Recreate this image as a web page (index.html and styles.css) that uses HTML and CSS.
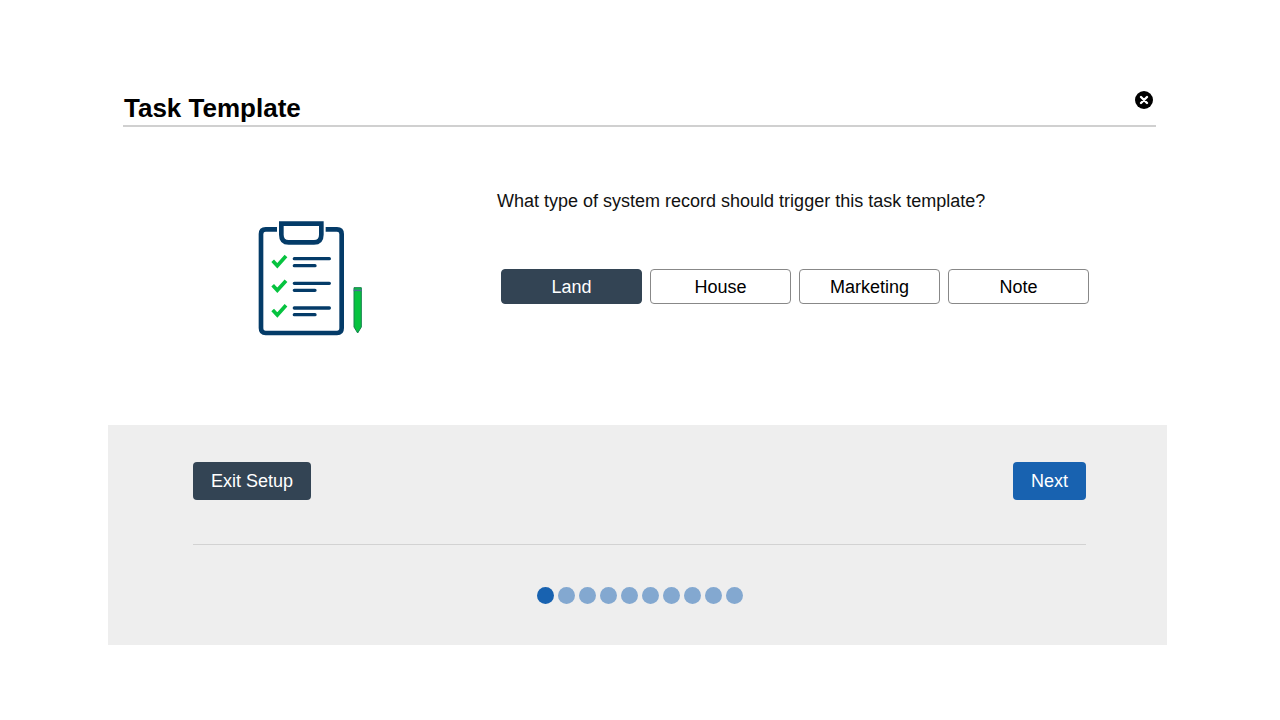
FILE: index.html
```
<!DOCTYPE html>
<html lang="en">
<head>
    <meta charset="UTF-8">
    <meta name="viewport" content="width=device-width, initial-scale=1.0">
    <title>Task Template</title>
    <link rel="stylesheet" href="styles.css">
</head>
<body>
    <div class="wizard">
        <header class="wizard-header">
            <h1>Task Template</h1>
            <button type="button" class="close-btn" aria-label="Close">
                <svg width="18" height="18" viewBox="0 0 18 18">
                    <circle cx="9" cy="9" r="9" fill="#000"/>
                    <path d="M6 6l6 6M12 6l-6 6" stroke="#fff" stroke-width="2.4" stroke-linecap="round"/>
                </svg>
            </button>
        </header>

        <main class="wizard-body">
            <div class="illustration">
                <svg width="105" height="116" viewBox="54 30 315 348" fill="none" aria-hidden="true">
                    <!-- Clipboard -->
                    <g stroke="#043b68">
                        <path d="M111 58H77Q63 58 63 72V354Q63 369 77 369H291Q305 369 305 354V72Q305 58 291 58H257" stroke-width="14"/>
                        <path d="M124 41H244V74Q244 97 222 97H146Q124 97 124 74Z" stroke-width="14"/>
                        <path d="M163 146H268M163 167H225M163 220H268M163 241H225M163 294H268M163 314H225" stroke-width="10" stroke-linecap="round"/>
                    </g>
                    <!-- Check marks -->
                    <path d="M98 152L112 167L138 138M98 226L112 241L138 212M98 300L112 315L138 286" stroke="#06c33f" stroke-width="11"/>
                    <!-- Pencil -->
                    <path d="M342 233H364V351L353 369L342 351Z" fill="#06c33f" stroke="#17804f" stroke-width="3"/>
                    <path d="M341 241H365" stroke="#4c6f93" stroke-width="5"/>
                </svg>
            </div>
            <div class="question">
                <p id="question-text">What type of system record should trigger this task template?</p>
                <div class="options" role="group" aria-labelledby="question-text">
                    <button type="button" class="option selected" aria-pressed="true">Land</button>
                    <button type="button" class="option" aria-pressed="false">House</button>
                    <button type="button" class="option" aria-pressed="false">Marketing</button>
                    <button type="button" class="option" aria-pressed="false">Note</button>
                </div>
            </div>
        </main>

        <footer class="wizard-footer">
            <div class="actions">
                <button type="button" class="btn btn-exit">Exit Setup</button>
                <button type="button" class="btn btn-next">Next</button>
            </div>
            <div class="steps">
                <span class="dot active"></span>
                <span class="dot"></span>
                <span class="dot"></span>
                <span class="dot"></span>
                <span class="dot"></span>
                <span class="dot"></span>
                <span class="dot"></span>
                <span class="dot"></span>
                <span class="dot"></span>
                <span class="dot"></span>
            </div>
        </footer>
    </div>
</body>
</html>
```
FILE: styles.css
```
* {
    box-sizing: border-box;
}
body {
    font-family: "Liberation Sans", Arial, sans-serif;
    font-size: 18px;
    line-height: 24px;
    margin: 0;
    padding: 88px 113px 72px 108px;
    background-color: #fff;
    color: #111;
}
button {
    font: inherit;
    cursor: pointer;
}
.wizard-header {
    display: flex;
    justify-content: space-between;
    align-items: flex-start;
    margin: 0 11px 0 15px;
    padding: 3px 3px 0 1px;
    border-bottom: 2px solid #d0d0d0;
}
h1 {
    margin: 0;
    font-size: 26px;
    line-height: 34px;
    color: #000;
}
.close-btn {
    display: flex;
    padding: 0;
    border: 0;
    background: none;
}
.wizard-body {
    display: grid;
    grid-template-columns: 389px 1fr;
    padding: 62px 78px 89px 0;
}
.illustration {
    display: flex;
    justify-content: center;
    padding: 31px 0 0 16px;
}
.question p {
    margin: 0 0 56px;
}
.options {
    display: grid;
    grid-template-columns: repeat(4, 1fr);
    gap: 8px;
    margin-left: 4px;
}
.option {
    height: 35px;
    padding: 0;
    border: 1px solid #888;
    border-radius: 4px;
    background-color: #fff;
    color: #000;
}
.option.selected {
    background-color: #334454;
    border-color: #334454;
    color: #fff;
}
.wizard-footer {
    padding: 37px 81px 41px 85px;
    background-color: #eee;
}
.actions {
    display: flex;
    justify-content: space-between;
    padding-bottom: 44px;
    border-bottom: 1px solid #d2d2d2;
}
.btn {
    height: 38px;
    padding: 0 18px;
    border: 0;
    border-radius: 4px;
    color: #fff;
}
.btn-exit {
    background-color: #334454;
}
.btn-next {
    background-color: #1862b0;
}
.steps {
    display: flex;
    justify-content: center;
    gap: 4px;
    padding-top: 42px;
}
.dot {
    width: 17px;
    height: 17px;
    border-radius: 50%;
    background-color: #83a8d0;
}
.dot.active {
    background-color: #1862b0;
}
```
